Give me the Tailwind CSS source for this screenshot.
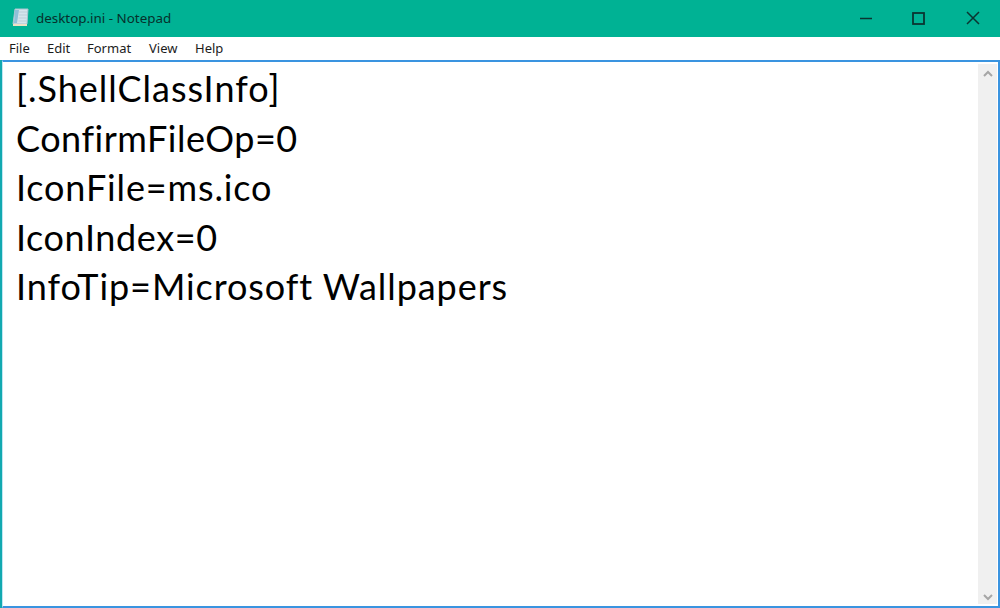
<!DOCTYPE html>
<html>
<head>
<meta charset="utf-8">
<script src="https://cdn.jsdelivr.net/npm/@tailwindcss/browser@4"></script>
</head>
<body class="m-0 bg-white">
<div class="w-[1000px] h-[608px] flex flex-col overflow-hidden bg-white">
  <div class="h-[37px] shrink-0 bg-[#00b294] flex items-center">
    <svg class="ml-[12px] mt-[-2px]" width="17" height="19" viewBox="0 0 17 19">
      <path d="M3 1 L16 1 L15 16 L1 16 Z" fill="#d5e4ec" stroke="#a9c4d0" stroke-width="1"/>
      <path d="M3 2 L7 2 L5 15 L2 15 Z" fill="#8fc0d8"/>
      <path d="M1 16 L15 16 L15 18 L1 18 Z" fill="#efe0c4"/>
      <path d="M7 4 H15 M7 7 H15 M6.500 10 H14.500 M6.500 13 H14.500" stroke="#bccfd8" stroke-width="1"/>
    </svg>
    <span class="ml-[7px] text-[13.400px] text-[#06302c] font-['Noto_Sans',sans-serif] mt-[-1px]">desktop.ini - Notepad</span>
    <div class="ml-auto flex items-center mt-[-1px]">
      <svg width="12" height="12" viewBox="0 0 12 12" class="mr-[40px]"><path d="M0 6.500 H12" stroke="#0a3531" stroke-width="1.500"/></svg>
      <svg width="13" height="13" viewBox="0 0 13 13" class="mr-[41px]"><rect x="1" y="1" width="11" height="11" fill="none" stroke="#0a3531" stroke-width="1.800"/></svg>
      <svg width="14" height="14" viewBox="0 0 14 14" class="mr-[20px]"><path d="M1 1 L13 13 M13 1 L1 13" stroke="#0a3531" stroke-width="1.500"/></svg>
    </div>
  </div>
  <div class="h-[23px] shrink-0 bg-white flex items-center pl-[9px] pt-[1px] text-[13px] text-[#1c1c1c] font-['Noto_Sans',sans-serif]">
    <span class="w-[38px]">File</span><span class="w-[40px]">Edit</span><span class="w-[62px]">Format</span><span class="w-[46px]">View</span><span>Help</span>
  </div>
  <div class="flex-1 min-h-0 flex border-l-2 border-[#12a9b0]">
    <div class="flex-1 min-w-0 flex border-t-2 border-b-2 border-r-2 border-l border-[#3a94e0] border-l-[#bfe6f2]">
      <div class="flex-1 pl-[13px] pt-[2px] text-[36px] leading-[49.500px] text-black font-['Lato',sans-serif]">
        <div class="tracking-[1px]">[.ShellClassInfo]</div>
        <div class="tracking-[0.500px]">ConfirmFileOp=0</div>
        <div class="tracking-[0.850px]">IconFile=ms.ico</div>
        <div class="tracking-[0.600px]">IconIndex=0</div>
        <div class="tracking-[0.930px]">InfoTip=Microsoft Wallpapers</div>
      </div>
      <div class="w-[19px] mr-px my-[2px] pt-[6px] pb-[3px] bg-[#f0f0f0] flex flex-col justify-between items-center">
        <svg width="10" height="7" viewBox="0 0 10 7"><path d="M1 6 L5 2 L9 6" fill="none" stroke="#a6a6a6" stroke-width="2"/></svg>
        <svg width="10" height="7" viewBox="0 0 10 7"><path d="M1 1 L5 5 L9 1" fill="none" stroke="#a6a6a6" stroke-width="2"/></svg>
      </div>
    </div>
  </div>
</div>
</body>
</html>
